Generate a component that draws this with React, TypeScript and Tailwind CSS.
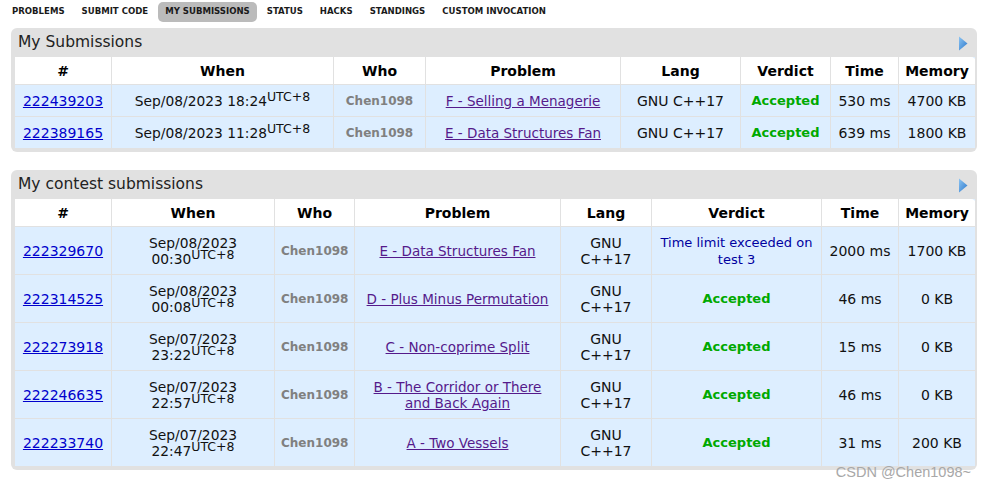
import React from "react"

const navItems = ["PROBLEMS", "SUBMIT CODE", "MY SUBMISSIONS", "STATUS", "HACKS", "STANDINGS", "CUSTOM INVOCATION"]

type Sub = {
  id: string
  date: string
  time: string
  problem: string
  verdict: "ok" | "tle"
  ms: string
  kb: string
}

const mine: Sub[] = [
  { id: "222439203", date: "Sep/08/2023", time: "18:24", problem: "F - Selling a Menagerie", verdict: "ok", ms: "530 ms", kb: "4700 KB" },
  { id: "222389165", date: "Sep/08/2023", time: "11:28", problem: "E - Data Structures Fan", verdict: "ok", ms: "639 ms", kb: "1800 KB" },
]

const contest: Sub[] = [
  { id: "222329670", date: "Sep/08/2023", time: "00:30", problem: "E - Data Structures Fan", verdict: "tle", ms: "2000 ms", kb: "1700 KB" },
  { id: "222314525", date: "Sep/08/2023", time: "00:08", problem: "D - Plus Minus Permutation", verdict: "ok", ms: "46 ms", kb: "0 KB" },
  { id: "222273918", date: "Sep/07/2023", time: "23:22", problem: "C - Non-coprime Split", verdict: "ok", ms: "15 ms", kb: "0 KB" },
  { id: "222246635", date: "Sep/07/2023", time: "22:57", problem: "B - The Corridor or There and Back Again", verdict: "ok", ms: "46 ms", kb: "0 KB" },
  { id: "222233740", date: "Sep/07/2023", time: "22:47", problem: "A - Two Vessels", verdict: "ok", ms: "31 ms", kb: "200 KB" },
]

const heads = ["#", "When", "Who", "Problem", "Lang", "Verdict", "Time", "Memory"]

function Arrow() {
  return (
    <svg width="10" height="15" viewBox="0 0 10 15">
      <defs>
        <linearGradient id="ar" x1="0" y1="0" x2="1" y2="1">
          <stop offset="0" stopColor="#8cc4f2" />
          <stop offset="1" stopColor="#2b78cc" />
        </linearGradient>
      </defs>
      <polygon points="1,0.5 9.5,7.5 1,14.5" fill="url(#ar)" />
    </svg>
  )
}

function Panel({ title, rows, widths, rowH }: { title: string; rows: Sub[]; widths: number[]; rowH: string }) {
  const td = "border border-[#e1e1e1] text-center align-middle px-[6px] leading-[16px]"
  return (
    <div className="ml-[11px] w-[966px] bg-[#e1e1e1] rounded-[6px] px-[3px] pb-[3px]">
      <div className="h-[28px] flex items-center justify-between pl-[4px] pr-[6px] pt-[2px]">
        <span className="text-[15.5px] text-[#222]">{title}</span>
        <Arrow />
      </div>
      <table className="w-[961px] table-fixed border-collapse bg-[#ddeeff]">
        <colgroup>
          {widths.map((w, i) => <col key={i} style={{ width: w }} />)}
        </colgroup>
        <thead>
          <tr className="h-[28px] bg-white">
            {heads.map((h, i) => (
              <th key={h} className={`${td} font-bold text-[14px] text-black ${i === 7 ? "rounded-tr-[5px]" : ""}`}>{h}</th>
            ))}
          </tr>
        </thead>
        <tbody>
          {rows.map(r => (
            <tr key={r.id} className={rowH}>
              <td className={`${td} text-[14px]`}>
                <a className="text-[#0000cc] underline">{r.id}</a>
              </td>
              <td className={`${td} text-[13.8px] text-[#111] leading-[15px]`}>
                {r.date} {r.time}<sup className="text-[12.5px] top-[-0.4em]">UTC+8</sup>
              </td>
              <td className={`${td} text-[12px] font-bold text-[#808080]`}>Chen1098</td>
              <td className={`${td} text-[13.5px]`}>
                <a className="text-[#551a8b] underline">{r.problem}</a>
              </td>
              <td className={`${td} text-[14px] text-[#111]`}>GNU C++17</td>
              <td className={td}>
                {r.verdict === "ok"
                  ? <span className="text-[13px] font-bold text-[#00a900]">Accepted</span>
                  : <span className="text-[13px] text-[#0000a0]">Time limit exceeded on test 3</span>}
              </td>
              <td className={`${td} text-[14px] text-[#111]`}>{r.ms}</td>
              <td className={`${td} text-[14px] text-[#111]`}>{r.kb}</td>
            </tr>
          ))}
        </tbody>
      </table>
    </div>
  )
}

export default function App() {
  return (
    <div className="relative w-[986px] h-[486px] bg-white overflow-hidden" style={{ fontFamily: '"DejaVu Sans", Verdana, sans-serif' }}>
      <div className="flex items-center gap-[3px] pl-[5px] pt-[1px] h-[22px]">
        {navItems.map(n => (
          <span
            key={n}
            className={`px-[7px] h-[20px] flex items-center rounded-[5px] text-[9.5px] font-bold text-[#1a1a1a] ${n === "MY SUBMISSIONS" ? "bg-[#bbbbbb]" : ""}`}
            style={{ fontFamily: '"DejaVu Sans Condensed", sans-serif' }}
          >
            {n}
          </span>
        ))}
      </div>
      <div className="mt-[6px]">
        <Panel title="My Submissions" rows={mine} widths={[97, 222, 92, 195, 120, 90, 68, 77]} rowH="h-[32px]" />
      </div>
      <div className="mt-[18px]">
        <Panel title="My contest submissions" rows={contest} widths={[97, 163, 80, 206, 91, 170, 77, 77]} rowH="h-[48px]" />
      </div>
      <div className="absolute right-[15px] top-[462px] text-[14.5px] text-[#a8a8a8]" style={{ fontFamily: '"Liberation Sans", Arial, sans-serif' }}>
        CSDN @Chen1098~
      </div>
    </div>
  )
}
